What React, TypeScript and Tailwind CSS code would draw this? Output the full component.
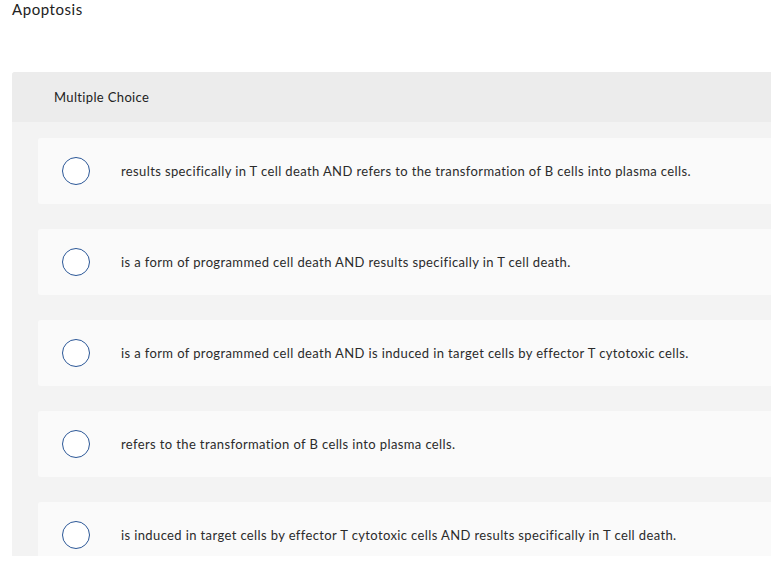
const choices = [
  "results specifically in T cell death AND refers to the transformation of B cells into plasma cells.",
  "is a form of programmed cell death AND results specifically in T cell death.",
  "is a form of programmed cell death AND is induced in target cells by effector T cytotoxic cells.",
  "refers to the transformation of B cells into plasma cells.",
  "is induced in target cells by effector T cytotoxic cells AND results specifically in T cell death.",
];

export default function App() {
  return (
    <div
      className="w-[771px] h-[564px] bg-white text-[#333] overflow-hidden"
      style={{ fontFamily: "Lato, 'Open Sans', sans-serif" }}
    >
      <h1 className="pl-3 text-[15px] leading-[19px] tracking-[0.55px] text-[#222]">Apoptosis</h1>

      <div className="ml-3 mt-[53px] h-[484px] overflow-hidden rounded-tl-[3px] bg-[#f3f3f3]">
        <div className="h-[50px] bg-[#ececec] pl-[42px] pt-[2px] flex items-center text-[13px] tracking-[0.35px] text-[#222]">
          Multiple Choice
        </div>

        <div className="pl-[26px] pt-4 flex flex-col gap-[25px]">
          {choices.map((c) => (
            <label
              key={c}
              className="h-[66px] shrink-0 bg-[#fafafa] rounded-l-[3px] flex items-center pl-6"
            >
              <span className="w-7 h-7 rounded-full border-[1.5px] border-[#2b5797] bg-white shrink-0" />
              <span className="ml-[31px] pt-[2px] text-[13px] tracking-[0.38px] text-[#2b2b2b]">{c}</span>
            </label>
          ))}
        </div>
      </div>
    </div>
  );
}
